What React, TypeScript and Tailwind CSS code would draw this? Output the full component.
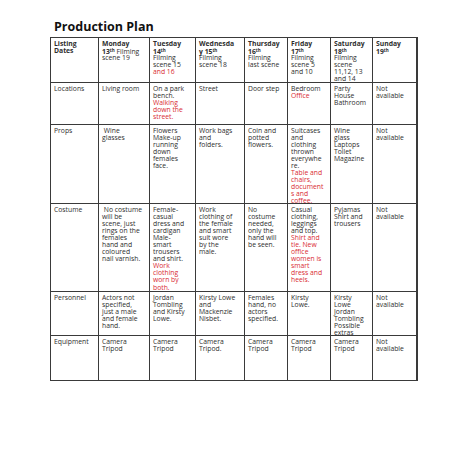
import React from 'react'

type Seg = { t: string; b?: boolean; red?: boolean; sup?: boolean }
type Line = Seg[]

const s = (t: string): Seg => ({ t })
const b = (t: string): Seg => ({ t, b: true })
const r = (t: string): Seg => ({ t, red: true })
const sup = (t: string): Seg => ({ t, b: true, sup: true })

// plain lines helper
const L = (...lines: string[]): Line[] => lines.map((l) => [s(l)])
const R = (...lines: string[]): Line[] => lines.map((l) => [r(l)])

const header: Line[][] = [
  [[b('Listing')], [b('Dates')]],
  [[b('Monday')], [b('13'), sup('th'), s(' Filming')], [s('scene 19')]],
  [[b('Tuesday')], [b('14'), sup('th')], [s('Filming')], [s('scene 15')], [r('and 16')]],
  [[b('Wednesda')], [b('y 15'), sup('th')], [s('Filming')], [s('scene 18')]],
  [[b('Thursday')], [b('16'), sup('th')], [s('Filming')], [s('last scene')]],
  [[b('Friday')], [b('17'), sup('th')], [s('Filming')], [s('scene 5')], [s('and 10')]],
  [[b('Saturday')], [b('18'), sup('th')], [s('Filming')], [s('scene')], [s('11,12, 13')], [s('and 14')]],
  [[b('Sunday')], [b('19'), sup('th')]],
]

const body: Line[][][] = [
  [
    L('Locations'),
    L('Living room'),
    [...L('On a park', 'bench.'), ...R('Walking', 'down the', 'street.')],
    L('Street'),
    L('Door step'),
    [...L('Bedroom'), ...R('Office')],
    L('Party', 'House', 'Bathroom'),
    L('Not', 'available'),
  ],
  [
    L('Props'),
    L('\u00a0Wine', 'glasses'),
    L('Flowers', 'Make-up', 'running', 'down', 'females', 'face.'),
    L('Work bags', 'and', 'folders.'),
    L('Coin and', 'potted', 'flowers.'),
    [
      ...L('Suitcases', 'and', 'clothing', 'thrown', 'everywhe', 're.'),
      ...R('Table and', 'chairs,', 'document', 's and', 'coffee.'),
    ],
    L('Wine', 'glass', 'Laptops', 'Toilet', 'Magazine'),
    L('Not', 'available'),
  ],
  [
    L('Costume'),
    L('\u00a0No costume', 'will be', 'scene, just', 'rings on the', 'females', 'hand and', 'coloured', 'nail varnish.'),
    [
      ...L('Female-', 'casual', 'dress and', 'cardigan', 'Male-', 'smart', 'trousers', 'and shirt.'),
      ...R('Work', 'clothing', 'worn by', 'both.'),
    ],
    L('Work', 'clothing of', 'the female', 'and smart', 'suit wore', 'by the', 'male.'),
    L('No', 'costume', 'needed,', 'only the', 'hand will', 'be seen.'),
    [
      ...L('Casual', 'clothing,', 'leggings', 'and top.'),
      ...R('Shirt and', 'tie. New', 'office', 'women is', 'smart', 'dress and', 'heels.'),
    ],
    L('Pyjamas', 'Shirt and', 'trousers'),
    L('Not', 'available'),
  ],
  [
    L('Personnel'),
    L('Actors not', 'specified,', 'just a male', 'and female', 'hand.'),
    L('Jordan', 'Tombling', 'and Kirsty', 'Lowe.'),
    L('Kirsty Lowe', 'and', 'Mackenzie', 'Nisbet.'),
    L('Females', 'hand, no', 'actors', 'specified.'),
    L('Kirsty', 'Lowe.'),
    L('Kirsty', 'Lowe', 'Jordan', 'Tombling', 'Possible', 'extras'),
    L('Not', 'available'),
  ],
  [
    L('Equipment'),
    L('Camera', 'Tripod'),
    L('Camera', 'Tripod'),
    L('Camera', 'Tripod.'),
    L('Camera', 'Tripod'),
    L('Camera', 'Tripod'),
    L('Camera', 'Tripod'),
    L('Not', 'available'),
  ],
]

function Cell({ lines }: { lines: Line[] }) {
  return (
    <div className="bg-white pl-[3px] pr-[1px] pt-[1.5px]">
      {lines.map((line, i) => (
        <div key={i} className="relative whitespace-nowrap leading-[7.1px] h-[7.1px]">
          {line.map((seg, j) => (
            <span
              key={j}
              className={
                (seg.b ? 'font-bold ' : '') +
                (seg.red ? 'text-[#d92b34] ' : '') +
                (seg.sup ? 'text-[4.5px] align-[2px]' : '')
              }
            >
              {seg.t}
            </span>
          ))}
        </div>
      ))}
    </div>
  )
}

export default function App() {
  return (
    <div className="w-[453px] h-[453px] bg-white text-[#2e2e2e] font-['Open_Sans',sans-serif]">
      <div className="pl-[54px] pt-[19px] h-[37px]">
        <h1 className="text-[12.5px] font-bold leading-[16px] text-[#111]">Production Plan</h1>
      </div>
      <div className="ml-[50px] w-[368px] grid grid-cols-[47px_50px_45px_48px_42px_42px_41px_43px] grid-rows-[44px_41px_78px_87px_43px_44px] gap-px p-px bg-[#3a3a3a] text-[6.8px]">
        {header.map((lines, i) => (
          <Cell key={'h' + i} lines={lines} />
        ))}
        {body.map((row, ri) =>
          row.map((lines, ci) => <Cell key={ri + '-' + ci} lines={lines} />)
        )}
      </div>
    </div>
  )
}
